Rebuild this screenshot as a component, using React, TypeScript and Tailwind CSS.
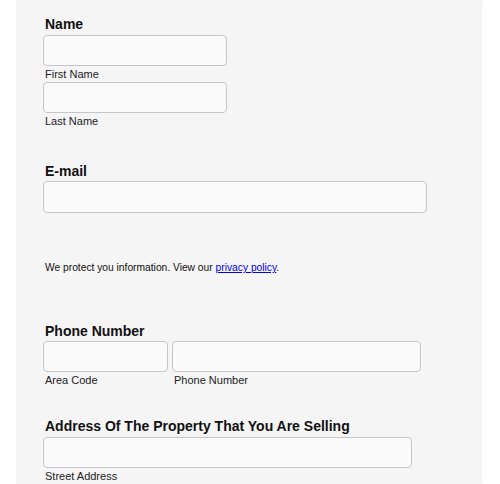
import React from 'react';

const Heading: React.FC<{ children: React.ReactNode; className?: string }> = ({ children, className = '' }) => (
  <h3 className={`pl-[2px] text-[14px] leading-[18px] font-bold text-[#111] ${className}`}>{children}</h3>
);

const Field: React.FC<{ className?: string }> = ({ className = '' }) => (
  <div className={`h-[31px] rounded-[4px] border border-[#c6c6ca] bg-[#fafafa] ${className}`} />
);

const Sub: React.FC<{ children: React.ReactNode; className?: string }> = ({ children, className = '' }) => (
  <div className={`pl-[2px] text-[11px] leading-[14px] text-[#222] ${className}`}>{children}</div>
);

export default function App() {
  return (
    <div className="w-[500px] h-[484px] overflow-hidden bg-white" style={{ fontFamily: '"Liberation Sans", Arial, sans-serif' }}>
      <div className="ml-[16px] w-[466px] h-[484px] bg-[#f5f5f5] border-r border-dotted border-[#ececec] pl-[27px] pt-[15px]">
        <Heading>Name</Heading>
        <Field className="mt-[2px] w-[184px]" />
        <Sub className="mt-[1px]">First Name</Sub>
        <Field className="mt-[1px] w-[184px]" />
        <Sub className="mt-[1px]">Last Name</Sub>

        <Heading className="mt-[34px]">E-mail</Heading>
        <Field className="mt-[1px] w-[384px] h-[32px]" />

        <p className="mt-[48px] pl-[2px] text-[10.25px] leading-[14px] text-[#111]">
          We protect you information. View our{' '}
          <a href="#" className="text-[#0000ee] underline">privacy policy</a>.
        </p>

        <Heading className="mt-[47px]">Phone Number</Heading>
        <div className="mt-[1px] flex gap-[4px]">
          <div className="w-[125px]">
            <Field />
            <Sub className="mt-[1px]">Area Code</Sub>
          </div>
          <div className="w-[249px]">
            <Field />
            <Sub className="mt-[1px]">Phone Number</Sub>
          </div>
        </div>

        <Heading className="mt-[30px]">Address Of The Property That You Are Selling</Heading>
        <Field className="mt-[2px] w-[369px]" />
        <Sub className="mt-[1px]">Street Address</Sub>
      </div>
    </div>
  );
}
